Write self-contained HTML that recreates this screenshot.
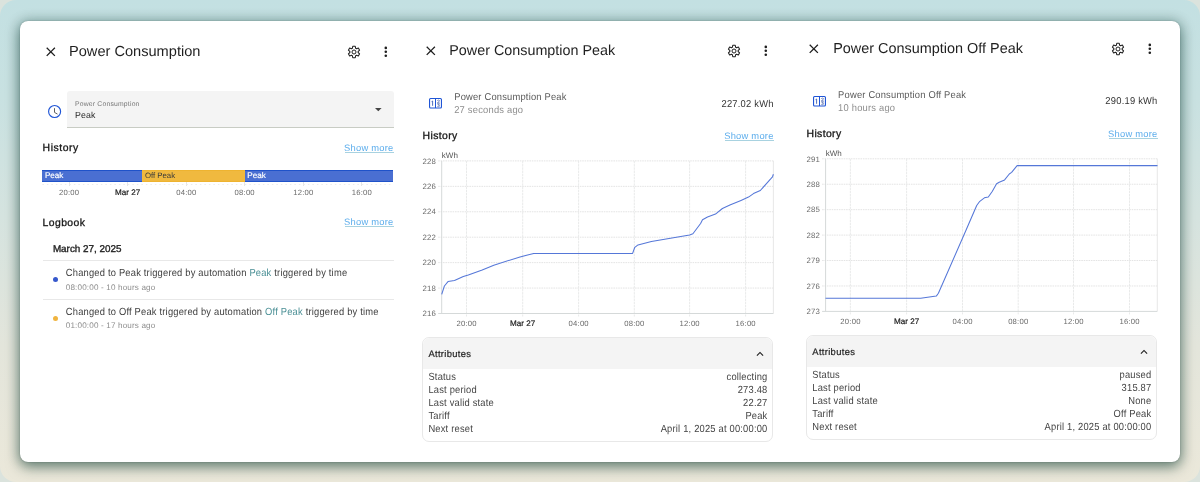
<!DOCTYPE html>
<html><head><meta charset="utf-8"><style>
html,body{margin:0;padding:0;}
body{width:1200px;height:482px;position:relative;overflow:hidden;background:#dbe3dd;font-family:'Liberation Sans', sans-serif;}
#bg{position:absolute;left:0;top:0;width:1200px;height:482px;border-radius:16px;background:linear-gradient(180deg,#c3e0e2 0%,#c8e1e1 20%,#d5e3df 45%,#e3e5db 72%,#ebe8da 100%);}
#card{position:absolute;left:20.3px;top:20.5px;width:1159.7px;height:441px;background:#fff;border-radius:8px;box-shadow:0 0 1.2px rgba(0,30,30,.4),0 5px 14px 0px rgba(0,50,40,.5),0 0 12px 2px rgba(0,50,40,.2);}
svg{overflow:visible}
#tx{position:absolute;left:0;top:0;will-change:transform;font-family:'Liberation Sans', sans-serif;text-rendering:geometricPrecision;}
</style></head><body>
<div id="bg"></div>
<div id="card"></div>
<svg style="position:absolute;left:42.50px;top:43.60px" width="15.60" height="15.60" viewBox="0 0 24 24"><path fill="#1f1f1f" d="M19,6.41L17.59,5L12,10.59L6.41,5L5,6.41L10.59,12L5,17.59L6.41,19L12,13.41L17.59,19L19,17.59L13.41,12L19,6.41Z"/></svg>
<svg style="position:absolute;left:346.00px;top:43.70px" width="16" height="16" viewBox="-8 -8 16 16"><path d="M-1.62,-3.82L-1.23,-5.77L1.23,-5.77L1.62,-3.82L2.50,-3.31L4.38,-3.95L5.61,-1.82L4.12,-0.51L4.12,0.51L5.61,1.82L4.38,3.95L2.50,3.31L1.62,3.82L1.23,5.77L-1.23,5.77L-1.62,3.82L-2.50,3.31L-4.38,3.95L-5.61,1.82L-4.12,0.51L-4.12,-0.51L-5.61,-1.82L-4.38,-3.95L-2.50,-3.31Z" fill="none" stroke="#1f1f1f" stroke-width="1.05" stroke-linejoin="round"/><circle r="2.0" fill="none" stroke="#1f1f1f" stroke-width="1.0"/></svg>
<svg style="position:absolute;left:378.10px;top:43.60px" width="15.60" height="15.60" viewBox="0 0 24 24"><path fill="#1f1f1f" d="M12,16A2,2 0 0,1 14,18A2,2 0 0,1 12,20A2,2 0 0,1 10,18A2,2 0 0,1 12,16M12,10A2,2 0 0,1 14,12A2,2 0 0,1 12,14A2,2 0 0,1 10,12A2,2 0 0,1 12,10M12,4A2,2 0 0,1 14,6A2,2 0 0,1 12,8A2,2 0 0,1 10,6A2,2 0 0,1 12,4Z"/></svg>
<svg style="position:absolute;left:0;top:0" width="1200" height="482"><circle cx="54.6" cy="111.5" r="6.0" fill="none" stroke="#1f55d6" stroke-width="1.15"/><path d="M54.5,108.2V112.4L57.5,114.1" fill="none" stroke="#555" stroke-width="0.95"/></svg>
<div style="position:absolute;left:66.60px;top:91.30px;width:327.20px;height:37.10px;background:#f4f4f4;border-radius:3px 3px 0 0;border-bottom:1.5px solid #c8ccc4;box-sizing:border-box"></div>
<svg style="position:absolute;left:374.8px;top:108px" width="6.6" height="3.4" viewBox="0 0 10 5"><path d="M0,0L10,0L5,5Z" fill="#444"/></svg>
<div style="position:absolute;left:344.70px;top:151.60px;width:49px;height:1px;background:#a8d2e0"></div>
<div style="position:absolute;left:42.40px;top:169.70px;width:99.90px;height:12.30px;background:#4a6fd2;border-top:1.1px solid #1f52c9;border-bottom:1px solid #1f52c9;box-sizing:border-box"></div>
<div style="position:absolute;left:142.30px;top:169.70px;width:102.60px;height:12.30px;background:#f0b93f;border-top:1.1px solid #eeb330;border-bottom:1px solid #eeb330;box-sizing:border-box"></div>
<div style="position:absolute;left:244.90px;top:169.70px;width:148.10px;height:12.30px;background:#4a6fd2;border-top:1.1px solid #1f52c9;border-bottom:1px solid #1f52c9;box-sizing:border-box"></div>
<div style="position:absolute;left:68.50px;top:182.00px;width:1.00px;height:3.50px;background:#e6e6e6"></div>
<div style="position:absolute;left:127.10px;top:182.00px;width:1.00px;height:3.50px;background:#e6e6e6"></div>
<div style="position:absolute;left:185.80px;top:182.00px;width:1.00px;height:3.50px;background:#e6e6e6"></div>
<div style="position:absolute;left:244.10px;top:182.00px;width:1.00px;height:3.50px;background:#e6e6e6"></div>
<div style="position:absolute;left:302.80px;top:182.00px;width:1.00px;height:3.50px;background:#e6e6e6"></div>
<div style="position:absolute;left:361.30px;top:182.00px;width:1.00px;height:3.50px;background:#e6e6e6"></div>
<svg style="position:absolute;left:0;top:0" width="1200" height="482"><line x1="42.4" y1="184.5" x2="393" y2="184.5" stroke="#ececec" stroke-width="1" stroke-dasharray="1.5,3"/></svg>
<div style="position:absolute;left:344.70px;top:225.60px;width:49px;height:1px;background:#a8d2e0"></div>
<div style="position:absolute;left:42.50px;top:260.30px;width:351.00px;height:1.00px;background:#e8e8e8"></div>
<div style="position:absolute;left:42.50px;top:299.30px;width:351.00px;height:1.00px;background:#e8e8e8"></div>
<div style="position:absolute;left:53.0px;top:277.3px;width:5.2px;height:5.2px;border-radius:50%;background:#3658cc"></div>
<div style="position:absolute;left:53.0px;top:315.7px;width:5.2px;height:5.2px;border-radius:50%;background:#f0b440"></div>
<svg style="position:absolute;left:422.80px;top:42.50px" width="15.60" height="15.60" viewBox="0 0 24 24"><path fill="#1f1f1f" d="M19,6.41L17.59,5L12,10.59L6.41,5L5,6.41L10.59,12L5,17.59L6.41,19L12,13.41L17.59,19L19,17.59L13.41,12L19,6.41Z"/></svg>
<svg style="position:absolute;left:726.30px;top:42.60px" width="16" height="16" viewBox="-8 -8 16 16"><path d="M-1.62,-3.82L-1.23,-5.77L1.23,-5.77L1.62,-3.82L2.50,-3.31L4.38,-3.95L5.61,-1.82L4.12,-0.51L4.12,0.51L5.61,1.82L4.38,3.95L2.50,3.31L1.62,3.82L1.23,5.77L-1.23,5.77L-1.62,3.82L-2.50,3.31L-4.38,3.95L-5.61,1.82L-4.12,0.51L-4.12,-0.51L-5.61,-1.82L-4.38,-3.95L-2.50,-3.31Z" fill="none" stroke="#1f1f1f" stroke-width="1.05" stroke-linejoin="round"/><circle r="2.0" fill="none" stroke="#1f1f1f" stroke-width="1.0"/></svg>
<svg style="position:absolute;left:758.20px;top:42.50px" width="15.60" height="15.60" viewBox="0 0 24 24"><path fill="#1f1f1f" d="M12,16A2,2 0 0,1 14,18A2,2 0 0,1 12,20A2,2 0 0,1 10,18A2,2 0 0,1 12,16M12,10A2,2 0 0,1 14,12A2,2 0 0,1 12,14A2,2 0 0,1 10,12A2,2 0 0,1 12,10M12,4A2,2 0 0,1 14,6A2,2 0 0,1 12,8A2,2 0 0,1 10,6A2,2 0 0,1 12,4Z"/></svg>
<svg style="position:absolute;left:429.00px;top:98.40px" width="13" height="10.5" viewBox="0 0 13 10.5"><rect x="0.55" y="0.55" width="11.9" height="9.4" rx="1" fill="none" stroke="#1f55d6" stroke-width="1.1"/><rect x="6" y="0.5" width="1" height="9.5" fill="#1f55d6"/><path d="M2.6,3.6L3.6,3V7.8" fill="none" stroke="#3b5fb8" stroke-width="0.9"/><path d="M8.3,2.6Q9.6,1.6 10.5,2.6Q10.8,3.3 8.3,5H10.7M8.3,6.1H10.4L9.3,7Q10.7,7.2 10.5,8.2Q9.6,9 8.3,8.3" fill="none" stroke="#4a62a8" stroke-width="0.75"/></svg>
<div style="position:absolute;left:724.80px;top:139.60px;width:49px;height:1px;background:#a8d2e0"></div>
<svg style="position:absolute;left:0;top:0" width="1200" height="482"><line x1="438.20" y1="160.90" x2="773.40" y2="160.90" stroke="#e4e4e4" stroke-width="1" stroke-dasharray="1.6,0.8"/><line x1="438.20" y1="186.33" x2="773.40" y2="186.33" stroke="#e4e4e4" stroke-width="1" stroke-dasharray="1.6,0.8"/><line x1="438.20" y1="211.77" x2="773.40" y2="211.77" stroke="#e4e4e4" stroke-width="1" stroke-dasharray="1.6,0.8"/><line x1="438.20" y1="237.20" x2="773.40" y2="237.20" stroke="#e4e4e4" stroke-width="1" stroke-dasharray="1.6,0.8"/><line x1="438.20" y1="262.63" x2="773.40" y2="262.63" stroke="#e4e4e4" stroke-width="1" stroke-dasharray="1.6,0.8"/><line x1="438.20" y1="288.07" x2="773.40" y2="288.07" stroke="#e4e4e4" stroke-width="1" stroke-dasharray="1.6,0.8"/><line x1="466.50" y1="160.90" x2="466.50" y2="316.50" stroke="#e6e8e8" stroke-width="0.9" stroke-dasharray="2.5,0.7"/><line x1="522.70" y1="160.90" x2="522.70" y2="316.50" stroke="#e6e8e8" stroke-width="0.9" stroke-dasharray="2.5,0.7"/><line x1="578.60" y1="160.90" x2="578.60" y2="316.50" stroke="#e6e8e8" stroke-width="0.9" stroke-dasharray="2.5,0.7"/><line x1="634.30" y1="160.90" x2="634.30" y2="316.50" stroke="#e6e8e8" stroke-width="0.9" stroke-dasharray="2.5,0.7"/><line x1="689.60" y1="160.90" x2="689.60" y2="316.50" stroke="#e6e8e8" stroke-width="0.9" stroke-dasharray="2.5,0.7"/><line x1="745.60" y1="160.90" x2="745.60" y2="316.50" stroke="#e6e8e8" stroke-width="0.9" stroke-dasharray="2.5,0.7"/><line x1="773.40" y1="160.90" x2="773.40" y2="313.50" stroke="#e4e4e4" stroke-width="0.9"/><line x1="441.70" y1="160.90" x2="441.70" y2="313.50" stroke="#d5d9d9" stroke-width="1"/><line x1="438.20" y1="313.50" x2="773.40" y2="313.50" stroke="#d5d9d9" stroke-width="1"/><polyline points="441.70,294.30 444.40,286.00 448.00,281.60 454.50,280.60 463.30,276.50 468.30,275.00 482.20,270.00 493.80,265.20 520.00,256.90 533.70,253.40 632.60,253.40 634.80,247.30 638.00,244.90 651.40,241.50 689.60,234.90 692.90,233.70 700.60,223.50 702.50,219.70 707.50,217.00 715.50,214.10 722.40,208.50 729.90,205.00 741.00,200.40 748.50,197.10 753.50,193.60 760.30,190.50 770.90,178.70 772.50,176.80 773.40,174.30" fill="none" stroke="#5577d8" stroke-width="1.05" stroke-linejoin="round"/></svg>
<div style="position:absolute;left:422.30px;top:337.10px;width:350.50px;height:104.50px;border:1px solid #e8e8e8;border-radius:7px;box-sizing:border-box"></div>
<div style="position:absolute;left:422.80px;top:337.60px;width:349.50px;height:31.60px;background:#f4f4f4;border-radius:6.5px 6.5px 0 0"></div>
<svg style="position:absolute;left:753.08px;top:346.88px" width="14.04" height="14.04" viewBox="0 0 24 24"><path fill="#222" d="M7.41,15.41L12,10.83L16.59,15.41L18,14L12,8L6,14L7.41,15.41Z"/></svg>
<svg style="position:absolute;left:806.30px;top:40.50px" width="15.60" height="15.60" viewBox="0 0 24 24"><path fill="#1f1f1f" d="M19,6.41L17.59,5L12,10.59L6.41,5L5,6.41L10.59,12L5,17.59L6.41,19L12,13.41L17.59,19L19,17.59L13.41,12L19,6.41Z"/></svg>
<svg style="position:absolute;left:1110.20px;top:40.60px" width="16" height="16" viewBox="-8 -8 16 16"><path d="M-1.62,-3.82L-1.23,-5.77L1.23,-5.77L1.62,-3.82L2.50,-3.31L4.38,-3.95L5.61,-1.82L4.12,-0.51L4.12,0.51L5.61,1.82L4.38,3.95L2.50,3.31L1.62,3.82L1.23,5.77L-1.23,5.77L-1.62,3.82L-2.50,3.31L-4.38,3.95L-5.61,1.82L-4.12,0.51L-4.12,-0.51L-5.61,-1.82L-4.38,-3.95L-2.50,-3.31Z" fill="none" stroke="#1f1f1f" stroke-width="1.05" stroke-linejoin="round"/><circle r="2.0" fill="none" stroke="#1f1f1f" stroke-width="1.0"/></svg>
<svg style="position:absolute;left:1142.10px;top:40.50px" width="15.60" height="15.60" viewBox="0 0 24 24"><path fill="#1f1f1f" d="M12,16A2,2 0 0,1 14,18A2,2 0 0,1 12,20A2,2 0 0,1 10,18A2,2 0 0,1 12,16M12,10A2,2 0 0,1 14,12A2,2 0 0,1 12,14A2,2 0 0,1 10,12A2,2 0 0,1 12,10M12,4A2,2 0 0,1 14,6A2,2 0 0,1 12,8A2,2 0 0,1 10,6A2,2 0 0,1 12,4Z"/></svg>
<svg style="position:absolute;left:812.90px;top:96.30px" width="13" height="10.5" viewBox="0 0 13 10.5"><rect x="0.55" y="0.55" width="11.9" height="9.4" rx="1" fill="none" stroke="#1f55d6" stroke-width="1.1"/><rect x="6" y="0.5" width="1" height="9.5" fill="#1f55d6"/><path d="M2.6,3.6L3.6,3V7.8" fill="none" stroke="#3b5fb8" stroke-width="0.9"/><path d="M8.3,2.6Q9.6,1.6 10.5,2.6Q10.8,3.3 8.3,5H10.7M8.3,6.1H10.4L9.3,7Q10.7,7.2 10.5,8.2Q9.6,9 8.3,8.3" fill="none" stroke="#4a62a8" stroke-width="0.75"/></svg>
<div style="position:absolute;left:1108.70px;top:137.60px;width:49px;height:1px;background:#a8d2e0"></div>
<svg style="position:absolute;left:0;top:0" width="1200" height="482"><line x1="822.10" y1="158.80" x2="1157.30" y2="158.80" stroke="#e4e4e4" stroke-width="1" stroke-dasharray="1.6,0.8"/><line x1="822.10" y1="184.23" x2="1157.30" y2="184.23" stroke="#e4e4e4" stroke-width="1" stroke-dasharray="1.6,0.8"/><line x1="822.10" y1="209.67" x2="1157.30" y2="209.67" stroke="#e4e4e4" stroke-width="1" stroke-dasharray="1.6,0.8"/><line x1="822.10" y1="235.10" x2="1157.30" y2="235.10" stroke="#e4e4e4" stroke-width="1" stroke-dasharray="1.6,0.8"/><line x1="822.10" y1="260.53" x2="1157.30" y2="260.53" stroke="#e4e4e4" stroke-width="1" stroke-dasharray="1.6,0.8"/><line x1="822.10" y1="285.97" x2="1157.30" y2="285.97" stroke="#e4e4e4" stroke-width="1" stroke-dasharray="1.6,0.8"/><line x1="850.40" y1="158.80" x2="850.40" y2="314.40" stroke="#e6e8e8" stroke-width="0.9" stroke-dasharray="2.5,0.7"/><line x1="906.60" y1="158.80" x2="906.60" y2="314.40" stroke="#e6e8e8" stroke-width="0.9" stroke-dasharray="2.5,0.7"/><line x1="962.50" y1="158.80" x2="962.50" y2="314.40" stroke="#e6e8e8" stroke-width="0.9" stroke-dasharray="2.5,0.7"/><line x1="1018.20" y1="158.80" x2="1018.20" y2="314.40" stroke="#e6e8e8" stroke-width="0.9" stroke-dasharray="2.5,0.7"/><line x1="1073.50" y1="158.80" x2="1073.50" y2="314.40" stroke="#e6e8e8" stroke-width="0.9" stroke-dasharray="2.5,0.7"/><line x1="1129.50" y1="158.80" x2="1129.50" y2="314.40" stroke="#e6e8e8" stroke-width="0.9" stroke-dasharray="2.5,0.7"/><line x1="1157.30" y1="158.80" x2="1157.30" y2="311.40" stroke="#e4e4e4" stroke-width="0.9"/><line x1="825.60" y1="158.80" x2="825.60" y2="311.40" stroke="#d5d9d9" stroke-width="1"/><line x1="822.10" y1="311.40" x2="1157.30" y2="311.40" stroke="#d5d9d9" stroke-width="1"/><polyline points="825.50,298.20 920.70,298.20 936.30,296.10 938.40,293.30 966.10,230.00 976.70,205.50 979.80,201.30 984.40,197.80 988.30,197.00 992.20,191.50 996.60,183.80 999.20,182.20 1004.60,179.90 1009.30,174.00 1011.60,172.40 1017.10,165.60 1157.50,165.60" fill="none" stroke="#5577d8" stroke-width="1.05" stroke-linejoin="round"/></svg>
<div style="position:absolute;left:806.20px;top:335.00px;width:350.50px;height:104.50px;border:1px solid #e8e8e8;border-radius:7px;box-sizing:border-box"></div>
<div style="position:absolute;left:806.70px;top:335.50px;width:349.50px;height:31.60px;background:#f4f4f4;border-radius:6.5px 6.5px 0 0"></div>
<svg style="position:absolute;left:1136.98px;top:344.78px" width="14.04" height="14.04" viewBox="0 0 24 24"><path fill="#222" d="M7.41,15.41L12,10.83L16.59,15.41L18,14L12,8L6,14L7.41,15.41Z"/></svg>
<svg id="tx" width="1200" height="482">
<text x="69.00" y="56" fill="#1f1f1f" text-anchor="start" style="font-size:14.6px;letter-spacing:0px">Power Consumption</text>
<text x="75.00" y="106" fill="#777" text-anchor="start" style="font-size:6.8px;letter-spacing:0.2px">Power Consumption</text>
<text x="75.00" y="118" fill="#2b2b2b" text-anchor="start" style="font-size:8.8px;letter-spacing:0.15px">Peak</text>
<text x="42.60" y="151" fill="#141414" stroke="#141414" stroke-width="0.3" text-anchor="start" style="font-size:10.4px;letter-spacing:0.55px">History</text>
<text x="393.54" y="151" fill="#5cadec" text-anchor="end" style="font-size:9.35px;letter-spacing:0.24px">Show more</text>
<text x="44.90" y="178" fill="#ffffff" stroke="#ffffff" stroke-width="0.18" text-anchor="start" style="font-size:8.1px;letter-spacing:0px">Peak</text>
<text x="144.90" y="178" fill="#3a3a3a" text-anchor="start" style="font-size:7.8px;letter-spacing:0px">Off Peak</text>
<text x="247.30" y="178" fill="#ffffff" stroke="#ffffff" stroke-width="0.18" text-anchor="start" style="font-size:8.1px;letter-spacing:0px">Peak</text>
<text x="69.11" y="195" fill="#6b6b6b" text-anchor="middle" style="font-size:7.7px;letter-spacing:0.22px">20:00</text>
<text x="127.60" y="195" fill="#1a1a1a" stroke="#1a1a1a" stroke-width="0.2" text-anchor="middle" style="font-size:8.1px;letter-spacing:0px">Mar 27</text>
<text x="186.41" y="195" fill="#6b6b6b" text-anchor="middle" style="font-size:7.7px;letter-spacing:0.22px">04:00</text>
<text x="244.71" y="195" fill="#6b6b6b" text-anchor="middle" style="font-size:7.7px;letter-spacing:0.22px">08:00</text>
<text x="303.41" y="195" fill="#6b6b6b" text-anchor="middle" style="font-size:7.7px;letter-spacing:0.22px">12:00</text>
<text x="361.91" y="195" fill="#6b6b6b" text-anchor="middle" style="font-size:7.7px;letter-spacing:0.22px">16:00</text>
<text x="42.60" y="226" fill="#141414" stroke="#141414" stroke-width="0.3" text-anchor="start" style="font-size:10.4px;letter-spacing:0.4px">Logbook</text>
<text x="393.54" y="225" fill="#5cadec" text-anchor="end" style="font-size:9.35px;letter-spacing:0.24px">Show more</text>
<text x="52.90" y="252" fill="#1f1f1f" stroke="#1f1f1f" stroke-width="0.35" text-anchor="start" style="font-size:9.9px;letter-spacing:0.0px">March 27, 2025</text>
<text transform="translate(65.80,276) scale(1,1.1)" fill="#3d3d3d" text-anchor="start" style="font-size:9.35px;letter-spacing:0.2px">Changed to Peak triggered by automation <tspan fill="#4a8f95">Peak</tspan> triggered by time</text>
<text x="65.80" y="290" fill="#8d8d8d" text-anchor="start" style="font-size:8.1px;letter-spacing:0.16px">08:00:00 - 10 hours ago</text>
<text transform="translate(65.80,315) scale(1,1.1)" fill="#3d3d3d" text-anchor="start" style="font-size:9.35px;letter-spacing:0.2px">Changed to Off Peak triggered by automation <tspan fill="#4a8f95">Off Peak</tspan> triggered by time</text>
<text x="65.80" y="328" fill="#8d8d8d" text-anchor="start" style="font-size:8.1px;letter-spacing:0.16px">01:00:00 - 17 hours ago</text>
<text x="449.30" y="55" fill="#1f1f1f" text-anchor="start" style="font-size:14.35px;letter-spacing:0px">Power Consumption Peak</text>
<text transform="translate(454.20,100) scale(1,1.06)" fill="#5a5a5a" text-anchor="start" style="font-size:9.35px;letter-spacing:0.2px">Power Consumption Peak</text>
<text transform="translate(454.20,113) scale(1,1.06)" fill="#8d8d8d" text-anchor="start" style="font-size:9.35px;letter-spacing:0.22px">27 seconds ago</text>
<text transform="translate(773.63,107) scale(1,1.06)" fill="#333" text-anchor="end" style="font-size:9.35px;letter-spacing:0.23px">227.02 kWh</text>
<text x="422.60" y="139" fill="#141414" stroke="#141414" stroke-width="0.3" text-anchor="start" style="font-size:10.4px;letter-spacing:0.38px">History</text>
<text x="773.64" y="139" fill="#5cadec" text-anchor="end" style="font-size:9.35px;letter-spacing:0.24px">Show more</text>
<text x="436.10" y="164" fill="#6b6b6b" text-anchor="end" style="font-size:7.8px;letter-spacing:0.2px">228</text>
<text x="436.10" y="189" fill="#6b6b6b" text-anchor="end" style="font-size:7.8px;letter-spacing:0.2px">226</text>
<text x="436.10" y="214" fill="#6b6b6b" text-anchor="end" style="font-size:7.8px;letter-spacing:0.2px">224</text>
<text x="436.10" y="240" fill="#6b6b6b" text-anchor="end" style="font-size:7.8px;letter-spacing:0.2px">222</text>
<text x="436.10" y="265" fill="#6b6b6b" text-anchor="end" style="font-size:7.8px;letter-spacing:0.2px">220</text>
<text x="436.10" y="291" fill="#6b6b6b" text-anchor="end" style="font-size:7.8px;letter-spacing:0.2px">218</text>
<text x="436.10" y="316" fill="#6b6b6b" text-anchor="end" style="font-size:7.8px;letter-spacing:0.2px">216</text>
<text x="441.80" y="158" fill="#555" text-anchor="start" style="font-size:8.07px;letter-spacing:0px">kWh</text>
<text x="466.61" y="326" fill="#6b6b6b" text-anchor="middle" style="font-size:7.7px;letter-spacing:0.22px">20:00</text>
<text x="522.70" y="326" fill="#1a1a1a" stroke="#1a1a1a" stroke-width="0.2" text-anchor="middle" style="font-size:8.1px;letter-spacing:0px">Mar 27</text>
<text x="578.71" y="326" fill="#6b6b6b" text-anchor="middle" style="font-size:7.7px;letter-spacing:0.22px">04:00</text>
<text x="634.41" y="326" fill="#6b6b6b" text-anchor="middle" style="font-size:7.7px;letter-spacing:0.22px">08:00</text>
<text x="689.71" y="326" fill="#6b6b6b" text-anchor="middle" style="font-size:7.7px;letter-spacing:0.22px">12:00</text>
<text x="745.71" y="326" fill="#6b6b6b" text-anchor="middle" style="font-size:7.7px;letter-spacing:0.22px">16:00</text>
<text x="428.40" y="357" fill="#1e1e1e" stroke="#1e1e1e" stroke-width="0.2" text-anchor="start" style="font-size:9.4px;letter-spacing:0.33px">Attributes</text>
<text transform="translate(428.40,380) scale(1,1.1)" fill="#444" text-anchor="start" style="font-size:9.35px;letter-spacing:0.2px">Status</text>
<text transform="translate(767.50,380) scale(1,1.1)" fill="#444" text-anchor="end" style="font-size:9.35px;letter-spacing:0.2px">collecting</text>
<text transform="translate(428.40,393) scale(1,1.1)" fill="#444" text-anchor="start" style="font-size:9.35px;letter-spacing:0.2px">Last period</text>
<text transform="translate(767.50,393) scale(1,1.1)" fill="#444" text-anchor="end" style="font-size:9.35px;letter-spacing:0.2px">273.48</text>
<text transform="translate(428.40,406) scale(1,1.1)" fill="#444" text-anchor="start" style="font-size:9.35px;letter-spacing:0.2px">Last valid state</text>
<text transform="translate(767.50,406) scale(1,1.1)" fill="#444" text-anchor="end" style="font-size:9.35px;letter-spacing:0.2px">22.27</text>
<text transform="translate(428.40,419) scale(1,1.1)" fill="#444" text-anchor="start" style="font-size:9.35px;letter-spacing:0.2px">Tariff</text>
<text transform="translate(767.50,419) scale(1,1.1)" fill="#444" text-anchor="end" style="font-size:9.35px;letter-spacing:0.2px">Peak</text>
<text transform="translate(428.40,432) scale(1,1.1)" fill="#444" text-anchor="start" style="font-size:9.35px;letter-spacing:0.2px">Next reset</text>
<text transform="translate(767.50,432) scale(1,1.1)" fill="#444" text-anchor="end" style="font-size:9.35px;letter-spacing:0.2px">April 1, 2025 at 00:00:00</text>
<text x="833.20" y="53" fill="#1f1f1f" text-anchor="start" style="font-size:14.43px;letter-spacing:0px">Power Consumption Off Peak</text>
<text transform="translate(838.10,98) scale(1,1.06)" fill="#5a5a5a" text-anchor="start" style="font-size:9.35px;letter-spacing:0.2px">Power Consumption Off Peak</text>
<text transform="translate(838.10,111) scale(1,1.06)" fill="#8d8d8d" text-anchor="start" style="font-size:9.35px;letter-spacing:0.22px">10 hours ago</text>
<text transform="translate(1157.53,104) scale(1,1.06)" fill="#333" text-anchor="end" style="font-size:9.35px;letter-spacing:0.23px">290.19 kWh</text>
<text x="806.50" y="137" fill="#141414" stroke="#141414" stroke-width="0.3" text-anchor="start" style="font-size:10.4px;letter-spacing:0.38px">History</text>
<text x="1157.54" y="137" fill="#5cadec" text-anchor="end" style="font-size:9.35px;letter-spacing:0.24px">Show more</text>
<text x="820.00" y="162" fill="#6b6b6b" text-anchor="end" style="font-size:7.8px;letter-spacing:0.2px">291</text>
<text x="820.00" y="187" fill="#6b6b6b" text-anchor="end" style="font-size:7.8px;letter-spacing:0.2px">288</text>
<text x="820.00" y="212" fill="#6b6b6b" text-anchor="end" style="font-size:7.8px;letter-spacing:0.2px">285</text>
<text x="820.00" y="238" fill="#6b6b6b" text-anchor="end" style="font-size:7.8px;letter-spacing:0.2px">282</text>
<text x="820.00" y="263" fill="#6b6b6b" text-anchor="end" style="font-size:7.8px;letter-spacing:0.2px">279</text>
<text x="820.00" y="289" fill="#6b6b6b" text-anchor="end" style="font-size:7.8px;letter-spacing:0.2px">276</text>
<text x="820.00" y="314" fill="#6b6b6b" text-anchor="end" style="font-size:7.8px;letter-spacing:0.2px">273</text>
<text x="825.70" y="156" fill="#555" text-anchor="start" style="font-size:8.07px;letter-spacing:0px">kWh</text>
<text x="850.51" y="324" fill="#6b6b6b" text-anchor="middle" style="font-size:7.7px;letter-spacing:0.22px">20:00</text>
<text x="906.60" y="324" fill="#1a1a1a" stroke="#1a1a1a" stroke-width="0.2" text-anchor="middle" style="font-size:8.1px;letter-spacing:0px">Mar 27</text>
<text x="962.61" y="324" fill="#6b6b6b" text-anchor="middle" style="font-size:7.7px;letter-spacing:0.22px">04:00</text>
<text x="1018.31" y="324" fill="#6b6b6b" text-anchor="middle" style="font-size:7.7px;letter-spacing:0.22px">08:00</text>
<text x="1073.61" y="324" fill="#6b6b6b" text-anchor="middle" style="font-size:7.7px;letter-spacing:0.22px">12:00</text>
<text x="1129.61" y="324" fill="#6b6b6b" text-anchor="middle" style="font-size:7.7px;letter-spacing:0.22px">16:00</text>
<text x="812.30" y="355" fill="#1e1e1e" stroke="#1e1e1e" stroke-width="0.2" text-anchor="start" style="font-size:9.4px;letter-spacing:0.33px">Attributes</text>
<text transform="translate(812.30,378) scale(1,1.1)" fill="#444" text-anchor="start" style="font-size:9.35px;letter-spacing:0.2px">Status</text>
<text transform="translate(1151.40,378) scale(1,1.1)" fill="#444" text-anchor="end" style="font-size:9.35px;letter-spacing:0.2px">paused</text>
<text transform="translate(812.30,391) scale(1,1.1)" fill="#444" text-anchor="start" style="font-size:9.35px;letter-spacing:0.2px">Last period</text>
<text transform="translate(1151.40,391) scale(1,1.1)" fill="#444" text-anchor="end" style="font-size:9.35px;letter-spacing:0.2px">315.87</text>
<text transform="translate(812.30,404) scale(1,1.1)" fill="#444" text-anchor="start" style="font-size:9.35px;letter-spacing:0.2px">Last valid state</text>
<text transform="translate(1151.40,404) scale(1,1.1)" fill="#444" text-anchor="end" style="font-size:9.35px;letter-spacing:0.2px">None</text>
<text transform="translate(812.30,417) scale(1,1.1)" fill="#444" text-anchor="start" style="font-size:9.35px;letter-spacing:0.2px">Tariff</text>
<text transform="translate(1151.40,417) scale(1,1.1)" fill="#444" text-anchor="end" style="font-size:9.35px;letter-spacing:0.2px">Off Peak</text>
<text transform="translate(812.30,430) scale(1,1.1)" fill="#444" text-anchor="start" style="font-size:9.35px;letter-spacing:0.2px">Next reset</text>
<text transform="translate(1151.40,430) scale(1,1.1)" fill="#444" text-anchor="end" style="font-size:9.35px;letter-spacing:0.2px">April 1, 2025 at 00:00:00</text>
</svg>
</body></html>
